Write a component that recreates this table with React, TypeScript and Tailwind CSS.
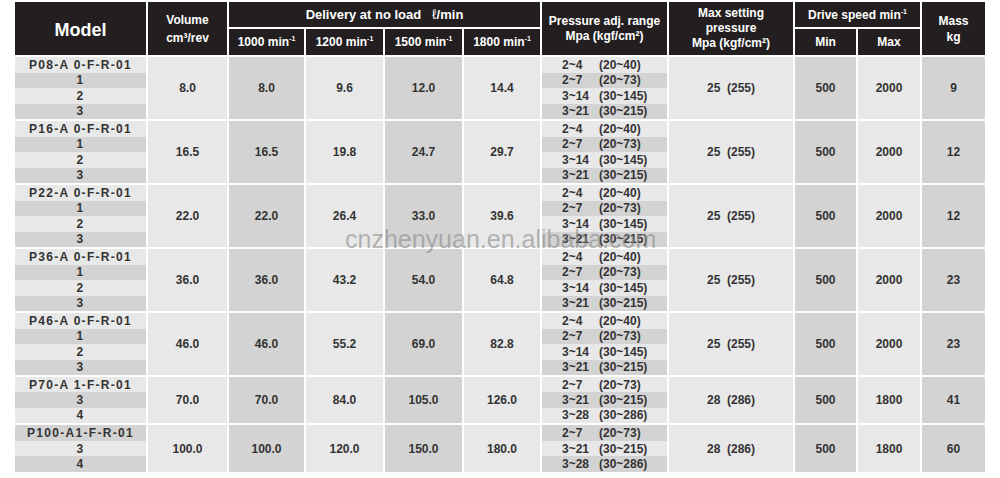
import React from 'react';

type Group = {
  model: string[];
  volume: string;
  delivery: string[];
  pressure: [string, string][];
  maxSet: string;
  min: string;
  max: string;
  mass: string;
};

const p4: [string, string][] = [
  ['2~4', '(20~40)'],
  ['2~7', '(20~73)'],
  ['3~14', '(30~145)'],
  ['3~21', '(30~215)'],
];
const p3: [string, string][] = [
  ['2~7', '(20~73)'],
  ['3~21', '(30~215)'],
  ['3~28', '(30~286)'],
];

const groups: Group[] = [
  { model: ['P08-A 0-F-R-01', '1', '2', '3'], volume: '8.0', delivery: ['8.0', '9.6', '12.0', '14.4'], pressure: p4, maxSet: '25  (255)', min: '500', max: '2000', mass: '9' },
  { model: ['P16-A 0-F-R-01', '1', '2', '3'], volume: '16.5', delivery: ['16.5', '19.8', '24.7', '29.7'], pressure: p4, maxSet: '25  (255)', min: '500', max: '2000', mass: '12' },
  { model: ['P22-A 0-F-R-01', '1', '2', '3'], volume: '22.0', delivery: ['22.0', '26.4', '33.0', '39.6'], pressure: p4, maxSet: '25  (255)', min: '500', max: '2000', mass: '12' },
  { model: ['P36-A 0-F-R-01', '1', '2', '3'], volume: '36.0', delivery: ['36.0', '43.2', '54.0', '64.8'], pressure: p4, maxSet: '25  (255)', min: '500', max: '2000', mass: '23' },
  { model: ['P46-A 0-F-R-01', '1', '2', '3'], volume: '46.0', delivery: ['46.0', '55.2', '69.0', '82.8'], pressure: p4, maxSet: '25  (255)', min: '500', max: '2000', mass: '23' },
  { model: ['P70-A 1-F-R-01', '3', '4'], volume: '70.0', delivery: ['70.0', '84.0', '105.0', '126.0'], pressure: p3, maxSet: '28  (286)', min: '500', max: '1800', mass: '41' },
  { model: ['P100-A1-F-R-01', '3', '4'], volume: '100.0', delivery: ['100.0', '120.0', '150.0', '180.0'], pressure: p3, maxSet: '28  (286)', min: '500', max: '1800', mass: '60' },
];

const LIGHT = 'bg-[#e8e8e8]';
const DARK = 'bg-[#d3d3d3]';

const Min1 = () => (
  <span>
    min<sup className="text-[7px] -top-[5px]">-1</sup>
  </span>
);

const Head = ({ className = '', children }: { className?: string; children: React.ReactNode }) => (
  <div className={`bg-[#231f20] text-white font-bold flex flex-col items-center justify-center text-center text-[12px] ${className}`}>
    {children}
  </div>
);

const Cell = ({ dark, children }: { dark?: boolean; children: React.ReactNode }) => (
  <div className={`${dark ? DARK : LIGHT} flex items-center justify-center text-[12px] font-bold text-[#333] whitespace-pre`}>
    {children}
  </div>
);

export default function App() {
  let idx = 0;
  return (
    <div className="w-[1000px] h-[478px] bg-white pl-[15px] pt-[2px] relative overflow-hidden" style={{ fontFamily: '"Liberation Sans", Arial, sans-serif' }}>
      <div className="grid grid-cols-[131px_79px_75px_77px_77px_76px_125px_124px_61px_62px_63px] grid-rows-[25px_26px_62px_62px_62px_62px_62px_46px_47px] gap-[2px]">
        <Head className="row-span-2 text-[18px] pt-[3px]">Model</Head>
        <Head className="row-span-2 leading-[18px]">
          <span>Volume</span>
          <span>cm³/rev</span>
        </Head>
        <Head className="col-span-4 text-[13px]">
          <span>
            Delivery at no load&nbsp;&nbsp;&nbsp;<span className="font-normal text-[14px]">ℓ</span>/min
          </span>
        </Head>
        <Head className="row-span-2 leading-[15px]">
          <span>Pressure adj. range</span>
          <span>Mpa (kgf/cm²)</span>
        </Head>
        <Head className="row-span-2 leading-[15px]">
          <span>Max setting</span>
          <span>pressure</span>
          <span>Mpa (kgf/cm²)</span>
        </Head>
        <Head className="col-span-2 text-[11px]">
          <span>
            Drive speed <Min1 />
          </span>
        </Head>
        <Head className="row-span-2 leading-[16px]">
          <span>Mass</span>
          <span>kg</span>
        </Head>
        <Head><span>1000 <Min1 /></span></Head>
        <Head><span>1200 <Min1 /></span></Head>
        <Head><span>1500 <Min1 /></span></Head>
        <Head><span>1800 <Min1 /></span></Head>
        <Head>Min</Head>
        <Head>Max</Head>

        {groups.map((g, gi) => {
          const start = idx;
          idx += g.model.length;
          return (
            <React.Fragment key={gi}>
              <div className="flex flex-col min-h-0">
                {g.model.map((m, i) => (
                  <div
                    key={i}
                    className={`flex-1 min-h-0 leading-none flex items-center justify-center text-[12px] font-bold text-[#333] tracking-[1.3px] ${(start + i) % 2 ? DARK : LIGHT}`}
                  >
                    {m}
                  </div>
                ))}
              </div>
              <Cell>{g.volume}</Cell>
              <Cell dark>{g.delivery[0]}</Cell>
              <Cell>{g.delivery[1]}</Cell>
              <Cell dark>{g.delivery[2]}</Cell>
              <Cell>{g.delivery[3]}</Cell>
              <div className="flex flex-col min-h-0">
                {g.pressure.map((p, i) => (
                  <div
                    key={i}
                    className={`flex-1 min-h-0 leading-none flex items-center pl-[20px] text-[12px] font-bold text-[#333] ${(start + i) % 2 ? DARK : LIGHT}`}
                  >
                    <span className="w-[37px]">{p[0]}</span>
                    <span>{p[1]}</span>
                  </div>
                ))}
              </div>
              <Cell>{g.maxSet}</Cell>
              <Cell dark>{g.min}</Cell>
              <Cell>{g.max}</Cell>
              <Cell dark>{g.mass}</Cell>
            </React.Fragment>
          );
        })}
      </div>
      <div className="absolute left-[345px] top-[227px] text-[25px] leading-none text-[#8a8a8a]/60 pointer-events-none">
        cnzhenyuan.en.alibaba.com
      </div>
    </div>
  );
}
